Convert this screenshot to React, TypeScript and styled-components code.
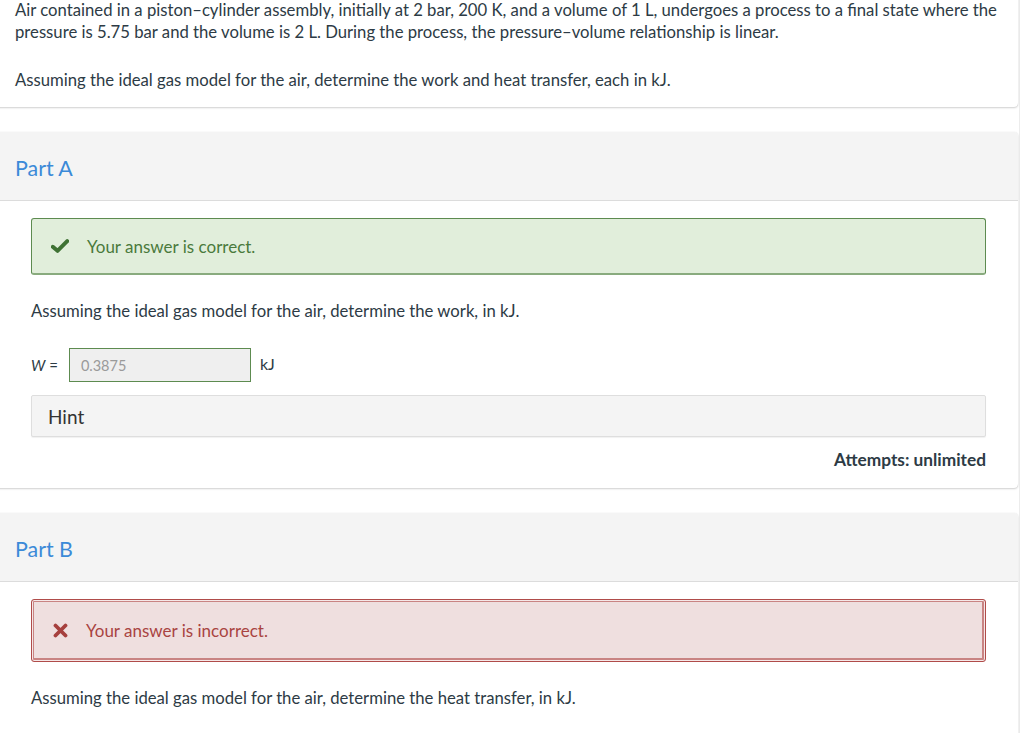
import React from 'react';
import styled, { createGlobalStyle } from 'styled-components';

const GlobalStyle = createGlobalStyle`
  html, body {
    margin: 0;
    padding: 0;
    background: #fff;
    overflow: hidden;
  }
  body {
    font-family: Lato, 'Open Sans', 'Liberation Sans', sans-serif;
    color: #2d3b45;
  }
`;

const Page = styled.div`
  width: 1024px;
  margin-top: -11px;
  margin-left: -4px;
  border-right: 1px solid #ececec;
  box-sizing: border-box;
`;

const Card = styled.section`
  width: 1022px;
  box-sizing: border-box;
  background: #fff;
  border-radius: 4px;
  box-shadow: 0 1px 2px rgba(0, 0, 0, 0.18), 0 0 1px rgba(0, 0, 0, 0.12);
  margin-bottom: 25px;
  overflow: hidden;
`;

const Statement = styled.div`
  padding: 10px 19px 16px;
  font-size: 16.7px;
  line-height: 22px;
  color: #2d3b45;

  p {
    margin: 0;
  }
  p + p {
    margin-top: 26px;
  }
`;

const PartHeader = styled.div`
  background: #f4f4f4;
  border-bottom: 1px solid #dcdcdc;
  height: 69px;
  display: flex;
  align-items: center;
  padding: 3px 19px 0;
  box-sizing: border-box;
  font-size: 21.4px;
  color: #3b8ad8;
`;

// $continues: the part goes on below the fold (answer field etc.)
const PartBody = styled.div<{ $continues?: boolean }>`
  padding: 17px 32px ${({ $continues }) => ($continues ? '80px' : '18px')} 35px;
`;

const Feedback = styled.div<{ $ok: boolean }>`
  display: flex;
  align-items: center;
  gap: 18px;
  box-sizing: border-box;
  border-radius: 3px;
  font-size: 17px;
  ${({ $ok }) =>
    $ok
      ? `
    height: 57px;
    padding: 0 19px;
    background: #e1eedb;
    color: #4a7a3c;
    border: 1px solid #5d8b50;
    border-bottom: 2px solid #89ab7e;
  `
      : `
    height: 63px;
    padding: 0 21px;
    background: #efdfdf;
    color: #a94442;
    border: 1px solid #b04c4a;
    box-shadow: inset 0 0 0 1px #f6e8e8, inset 0 0 0 2px #c98483, inset -1px -1px 0 2px #c98483;
  `}
`;

const Question = styled.p`
  margin: 25px 0 0;
  font-size: 16.7px;
  line-height: 22px;
  color: #2d3b45;
`;

const AnswerRow = styled.div`
  display: flex;
  align-items: center;
  margin-top: 26px;
  font-size: 16px;
`;

const Label = styled.span`
  font-size: 15px;
  margin-right: 11px;
  i {
    font-style: italic;
  }
`;

const Input = styled.div`
  width: 182px;
  height: 34px;
  box-sizing: border-box;
  border: 1px solid #5d8b50;
  background: #efefef;
  color: #9a9a9a;
  font-size: 14.5px;
  display: flex;
  align-items: center;
  padding-left: 11px;
`;

const Unit = styled.span`
  margin-left: 9px;
  margin-top: -3px;
`;

const Hint = styled.div`
  margin-top: 13px;
  height: 42px;
  box-sizing: border-box;
  background: #f4f4f4;
  border: 1px solid #dedede;
  border-radius: 2px;
  box-shadow: 0 1px 1px rgba(0, 0, 0, 0.06);
  display: flex;
  align-items: center;
  padding-left: 16px;
  font-size: 19px;
  color: #333;
`;

const Attempts = styled.div`
  margin-top: 12px;
  text-align: right;
  font-weight: 700;
  font-size: 17.3px;
  color: #2d3b45;
`;

const Check = () => (
  <svg width="18" height="14" viewBox="0 0 18 14">
    <path d="M1.8 7.8 L6.5 11.8 L16.2 2.2" fill="none" stroke="#3f7234" strokeWidth="4" strokeLinecap="round" strokeLinejoin="round" />
  </svg>
);

const Cross = () => (
  <svg width="15" height="15" viewBox="0 0 15 15">
    <path d="M2.5 2.5 L12.5 12.5 M12.5 2.5 L2.5 12.5" fill="none" stroke="#a6403e" strokeWidth="3.8" strokeLinecap="round" />
  </svg>
);

export default function App() {
  return (
    <Page>
      <GlobalStyle />
      <Card>
        <Statement>
          <p>
            Air contained in a piston–cylinder assembly, initially at 2 bar, 200 K, and a volume of 1 L, undergoes a process to a final state where the
            pressure is 5.75 bar and the volume is 2 L. During the process, the pressure–volume relationship is linear.
          </p>
          <p>Assuming the ideal gas model for the air, determine the work and heat transfer, each in kJ.</p>
        </Statement>
      </Card>

      <Card>
        <PartHeader>Part A</PartHeader>
        <PartBody>
          <Feedback $ok>
            <Check />
            Your answer is correct.
          </Feedback>
          <Question>Assuming the ideal gas model for the air, determine the work, in kJ.</Question>
          <AnswerRow>
            <Label>
              <i>W</i> =
            </Label>
            <Input>0.3875</Input>
            <Unit>kJ</Unit>
          </AnswerRow>
          <Hint>Hint</Hint>
          <Attempts>Attempts: unlimited</Attempts>
        </PartBody>
      </Card>

      <Card>
        <PartHeader>Part B</PartHeader>
        <PartBody $continues>
          <Feedback $ok={false}>
            <Cross />
            Your answer is incorrect.
          </Feedback>
          <Question>Assuming the ideal gas model for the air, determine the heat transfer, in kJ.</Question>
        </PartBody>
      </Card>
    </Page>
  );
}
